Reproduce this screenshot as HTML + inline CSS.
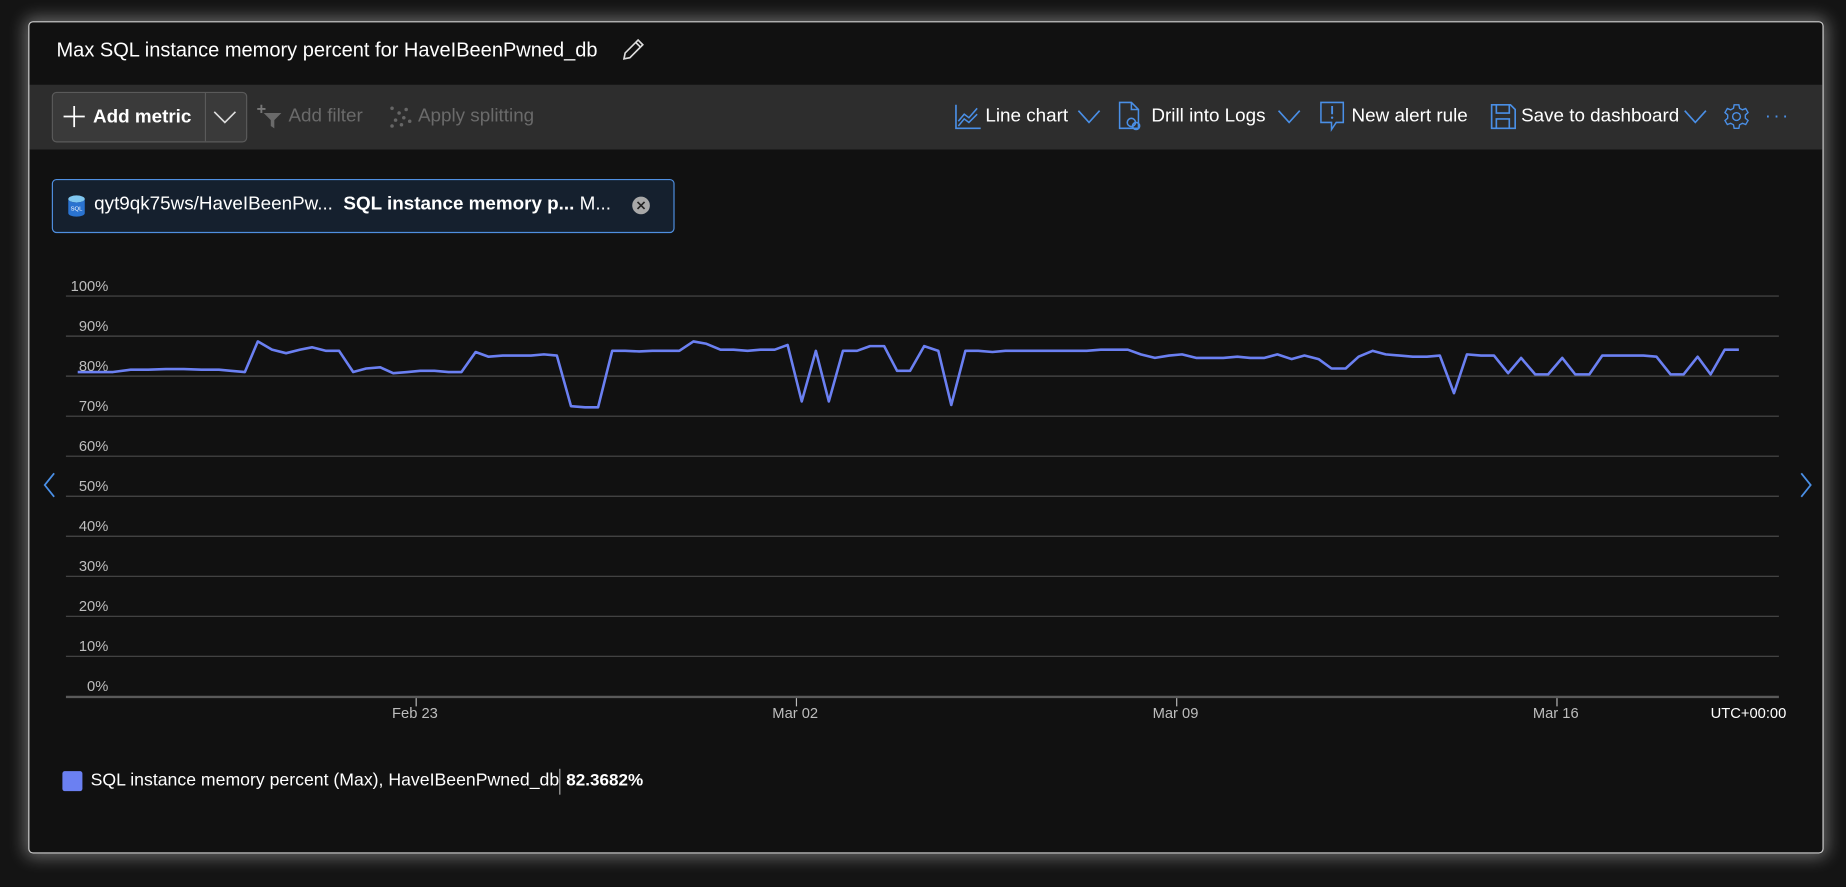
<!DOCTYPE html>
<html><head><meta charset="utf-8">
<style>
html,body{margin:0;padding:0;background:#121212;width:1846px;height:886px;overflow:hidden;}
#stage{position:absolute;left:0;top:0;width:1568px;height:753px;transform:scale(1.17730);transform-origin:0 0;font-family:"Liberation Sans",sans-serif;color:#fff;background:#141414;}
.panel{position:absolute;left:24px;top:18px;width:1523px;height:705px;border:1px solid #cfcfcf;border-radius:4px;background:#111;box-shadow:0 0 14px 3px rgba(255,255,255,0.35);overflow:hidden;}
.abs{position:absolute;white-space:nowrap;}
.title{left:23px;top:14px;font-size:17px;color:#fff;}
.tb{position:absolute;left:0;top:53px;width:1523px;height:55px;background:#2d2d2d;}
.btn{position:absolute;left:19px;top:6px;width:164px;height:41px;border:1px solid #5a5a5a;border-radius:4px;background:#3a3a3a;}
.t15{font-size:16px;}
.gray{color:#6a6a6a;}
.chip{left:19px;top:133px;width:527px;height:44px;border:1px solid #4f8fe0;border-radius:4px;background:#15202e;}
.yl{position:absolute;font-size:12.5px;color:#bdbdbd;width:40px;text-align:right;left:27px;}
.xl{position:absolute;font-size:12.5px;color:#bdbdbd;top:580px;}
</style></head><body>
<div id="stage">
<div class="panel">
  <div class="abs title">Max SQL instance memory percent for HaveIBeenPwned_db</div>
  <svg class="abs" style="left:502px;top:12px" width="22" height="22" viewBox="0 0 22 22"><path d="M3 19 L4 14 L15 3 L19 7 L8 18 Z M13 5 L17 9" fill="none" stroke="#ddd" stroke-width="1.4"/></svg>
  <div class="tb">
    <div class="btn">
      <svg class="abs" style="left:8px;top:10px" width="20" height="20"><path d="M10 1V19M1 10H19" stroke="#fff" stroke-width="1.5"/></svg>
      <div class="abs t15" style="left:34px;top:12px;font-weight:bold">Add metric</div>
      <div class="abs" style="left:129px;top:0;width:1px;height:41px;background:#5a5a5a"></div>
      <svg class="abs" style="left:135px;top:12px" width="22" height="16"><path d="M2 4 L11 13 L20 4" fill="none" stroke="#ddd" stroke-width="1.4"/></svg>
    </div>
    <svg class="abs" style="left:193px;top:16px" width="22" height="22"><path d="M4 1V8M0.5 4.5H7.5" stroke="#777" stroke-width="1.6"/><path d="M6 8H21L15 14V21L12 19V14Z" fill="#6a6a6a"/></svg>
    <div class="abs t15 gray" style="left:220px;top:18px">Add filter</div>
    <svg class="abs" style="left:304px;top:16px" width="22" height="22"><g fill="#666"><circle cx="4" cy="4" r="1.5"/><circle cx="10" cy="8" r="1.5"/><circle cx="16" cy="5" r="1.5"/><circle cx="7" cy="14" r="1.5"/><circle cx="14" cy="12" r="1.5"/><circle cx="4" cy="19" r="1.5"/><circle cx="12" cy="18" r="1.5"/><circle cx="19" cy="15" r="1.5"/></g></svg>
    <div class="abs t15 gray" style="left:330px;top:18px">Apply splitting</div>

    <svg class="abs" style="left:785px;top:15px" width="24" height="24"><path d="M2 2V22H23" fill="none" stroke="#4a8fe6" stroke-width="1.4"/><path d="M4 16L9 10L13 13L20 5M4 20L9 14L13 17L20 10" fill="none" stroke="#4a8fe6" stroke-width="1.3"/></svg>
    <div class="abs t15" style="left:812px;top:18px">Line chart</div>
    <svg class="abs" style="left:889px;top:20px" width="22" height="14"><path d="M2 2L11 12L20 2" fill="none" stroke="#4a8fe6" stroke-width="1.4"/></svg>
    <svg class="abs" style="left:923px;top:14px" width="24" height="26"><path d="M3 1H13L19 7V23H3Z M13 1V7H19" fill="none" stroke="#4a8fe6" stroke-width="1.3"/><circle cx="13" cy="18" r="3.5" fill="none" stroke="#4a8fe6" stroke-width="1.3"/><circle cx="17" cy="21" r="3" fill="none" stroke="#4a8fe6" stroke-width="1.3"/></svg>
    <div class="abs t15" style="left:953px;top:18px">Drill into Logs</div>
    <svg class="abs" style="left:1059px;top:20px" width="22" height="14"><path d="M2 2L11 12L20 2" fill="none" stroke="#4a8fe6" stroke-width="1.4"/></svg>
    <svg class="abs" style="left:1095px;top:13px" width="24" height="28"><path d="M2 2H21V19H15L11 25L11 19H2Z" fill="none" stroke="#4a8fe6" stroke-width="1.3"/><path d="M11.5 5V12" stroke="#4a8fe6" stroke-width="1.6"/><circle cx="11.5" cy="15" r="1" fill="#4a8fe6"/></svg>
    <div class="abs t15" style="left:1123px;top:18px">New alert rule</div>
    <svg class="abs" style="left:1240px;top:15px" width="24" height="24"><path d="M2 2H18L22 6V22H2Z M6 2V9H17V2 M6 22V14H17V22" fill="none" stroke="#4a8fe6" stroke-width="1.4"/></svg>
    <div class="abs t15" style="left:1267px;top:18px">Save to dashboard</div>
    <svg class="abs" style="left:1404px;top:20px" width="22" height="14"><path d="M2 2L11 12L20 2" fill="none" stroke="#4a8fe6" stroke-width="1.4"/></svg>
    <svg class="abs" style="left:1438px;top:15px" width="24" height="24" viewBox="0 0 24 24"><path d="M10 2H14L14.6 5 L17 6.3 L19.8 5.2 L21.8 8.6 L19.5 10.6 V13.4 L21.8 15.4 L19.8 18.8 L17 17.7 L14.6 19 L14 22 H10 L9.4 19 L7 17.7 L4.2 18.8 L2.2 15.4 L4.5 13.4 V10.6 L2.2 8.6 L4.2 5.2 L7 6.3 L9.4 5Z" fill="none" stroke="#4a8fe6" stroke-width="1.2"/><circle cx="12" cy="12" r="3.3" fill="none" stroke="#4a8fe6" stroke-width="1.2"/></svg>
    <div class="abs" style="left:1474px;top:18px;font-size:16px;color:#4a8fe6;letter-spacing:2px">···</div>
  </div>

  <div class="abs chip">
    <svg class="abs" style="left:12px;top:12px" width="16" height="20"><ellipse cx="8" cy="4" rx="7" ry="3" fill="#7fc7f0"/><path d="M1 4V16A7 3 0 0 0 15 16V4A7 3 0 0 1 1 4Z" fill="#2a73d0"/><text x="8" y="14" font-size="5" fill="#fff" text-anchor="middle" font-family="Liberation Sans">SQL</text></svg>
    <div class="abs" style="left:35px;top:12px;color:#fff;font-size:16px">qyt9qk75ws/HaveIBeenPw...&nbsp;&nbsp;<b>SQL instance memory p...</b> M...</div>
    <div class="abs" style="left:492px;top:14px;width:15px;height:15px;border-radius:50%;background:#a8a8a8"></div>
    <svg class="abs" style="left:492px;top:14px" width="15" height="15"><path d="M4.5 4.5L10.5 10.5M10.5 4.5L4.5 10.5" stroke="#222" stroke-width="1.4"/></svg>
  </div>

  <svg class="abs" style="left:-24px;top:-18px" width="1568" height="753">
    <g stroke="#4a4a4a" stroke-width="1">
      <line x1="55" x2="1510" y1="250.5" y2="250.5"/><line x1="55" x2="1510" y1="284.5" y2="284.5"/>
      <line x1="55" x2="1510" y1="318.5" y2="318.5"/><line x1="55" x2="1510" y1="352.5" y2="352.5"/>
      <line x1="55" x2="1510" y1="386.5" y2="386.5"/><line x1="55" x2="1510" y1="420.5" y2="420.5"/>
      <line x1="55" x2="1510" y1="454.5" y2="454.5"/><line x1="55" x2="1510" y1="488.5" y2="488.5"/>
      <line x1="55" x2="1510" y1="522.5" y2="522.5"/><line x1="55" x2="1510" y1="556.5" y2="556.5"/>
    </g>
    <line x1="55" x2="1510" y1="591" y2="591" stroke="#5a5a5a" stroke-width="2"/>
    <g stroke="#bbb" stroke-width="1"><line x1="352.5" x2="352.5" y1="592" y2="599"/><line x1="675.5" x2="675.5" y1="592" y2="599"/><line x1="998.5" x2="998.5" y1="592" y2="599"/><line x1="1321.5" x2="1321.5" y1="592" y2="599"/></g>
    <polyline fill="none" stroke="#6b80f2" stroke-width="2.2" stroke-linejoin="round" points="65,315 80,315 95,315 110,313 125,313 140,312.5 155,312.5 170,313 185,313 195,314 207,315 218,289 230,296 242,299 254,296 264,294 276,297 287,297 299,315 310,312 322,311 333,316 345,315 356,314 368,314 380,315 391,315 403,298 414,302 426,301 438,301 450,301 461,300 472,301 484,344 496,345 507,345 519,297 530,297 542,297.5 553,297 565,297 576,297 588,289 599,291 611,296 622,296 634,297 645,296 657,296 668,292 680,340 692,297 703,340 715,297 727,297 738,293 750,293 761,314 772,314 784,293 796,297 807,343 819,297 830,297 842,298 853,297 865,297 876,297 888,297 899,297 911,297 922,297 934,296 945,296 957,296 968,300 980,303 992,301 1003,300 1015,303 1026,303 1038,303 1050,302 1061,303 1073,303 1084,300 1096,304 1107,301 1119,304 1130,312 1142,312 1153,302 1165,297 1176,300 1188,301 1199,302 1211,302 1222,301 1234,333 1245,300 1257,301 1268,301 1280,316 1291,303 1303,317 1314,317 1326,303 1337,317 1349,317 1360,301 1372,301 1383,301 1395,301 1406,302 1418,317 1429,317 1441,302 1452,317 1464,296 1476,296"/>
    <path d="M45 401L37 411L45 421" fill="none" stroke="#4a8fe6" stroke-width="1.5"/>
    <path d="M1529 401L1537 411L1529 421" fill="none" stroke="#4a8fe6" stroke-width="1.5"/>
  </svg>
  <div class="yl" style="top:217px">100%</div><div class="yl" style="top:251px">90%</div>
  <div class="yl" style="top:285px">80%</div><div class="yl" style="top:319px">70%</div>
  <div class="yl" style="top:353px">60%</div><div class="yl" style="top:387px">50%</div>
  <div class="yl" style="top:421px">40%</div><div class="yl" style="top:455px">30%</div>
  <div class="yl" style="top:489px">20%</div><div class="yl" style="top:523px">10%</div>
  <div class="yl" style="top:557px">0%</div>
  <div class="xl" style="left:308px">Feb 23</div>
  <div class="xl" style="left:631px">Mar 02</div>
  <div class="xl" style="left:954px">Mar 09</div>
  <div class="xl" style="left:1277px">Mar 16</div>
  <div class="xl" style="left:1428px;color:#fff">UTC+00:00</div>

  <div class="abs" style="left:28px;top:636px;width:17px;height:17px;border-radius:2px;background:#6b80f2"></div>
  <div class="abs" style="left:52px;top:635px;font-size:15px;color:#fff">SQL instance memory percent (Max), HaveIBeenPwned_db</div>
  <div class="abs" style="left:450px;top:634px;width:1px;height:22px;background:#aaa"></div>
  <div class="abs" style="left:456px;top:636px;font-size:14.5px;font-weight:bold;color:#fff">82.3682%</div>
</div>
</div>
</body></html>
